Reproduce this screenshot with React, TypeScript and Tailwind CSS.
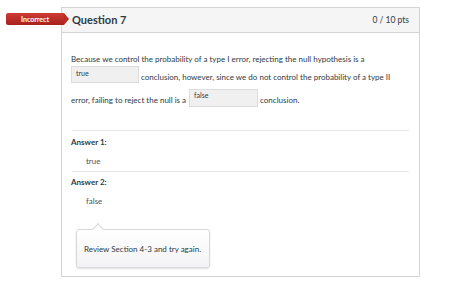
import React from "react";

export default function App() {
  return (
    <div className="w-[474px] h-[288px] bg-white relative overflow-hidden" style={{ fontFamily: "Lato, 'Open Sans', sans-serif" }}>
      <div className="pt-[7px] pl-[61px]">
        <div className="w-[359px] h-[270px] border border-[#d4d4d4] flex flex-col">
          <div className="h-[25px] bg-[#f5f5f5] border-b border-[#d4d4d4] flex items-center justify-between pl-[10px] pr-[10px]">
            <span className="text-[11px] font-bold text-[#2d3b45]">Question 7</span>
            <span className="text-[8.5px] text-[#2d3b45]">0 / 10 pts</span>
          </div>
          <div className="px-[9px] pt-[20px] text-[8px] text-[#2d3b45]">
            <div className="leading-[12px]">Because we control the probability of a type I error, rejecting the null hypothesis is a</div>
            <div className="flex items-end mt-[1px]">
              <div className="w-[68px] h-[17px] bg-[#f0f0f0] border border-[#dcdcdc] text-[7px] pl-[4px] pt-[2px] leading-[9px]">true</div>
              <span className="ml-[2px] leading-[12px]">conclusion, however, since we do not control the probability of a type II</span>
            </div>
            <div className="flex items-end mt-[6px]">
              <span className="leading-[12px] mb-[1px]">error, failing to reject the null is a</span>
              <div className="ml-[3px] w-[69px] h-[18px] bg-[#f0f0f0] border border-[#dcdcdc] text-[7px] pl-[4px] pt-[1px] leading-[9px]">false</div>
              <span className="ml-[2px] leading-[12px] mb-[1px]">conclusion.</span>
            </div>
            <div className="mt-[23px] border-t border-[#e6e6e6] mx-[1px]"></div>
            <div className="text-[8px] font-bold leading-[12px] mt-[5px]">Answer 1:</div>
            <div className="leading-[12px] mt-[7px] pl-[15px] text-[#4a5560]">true</div>
            <div className="mt-[4px] border-t border-[#e6e6e6] mx-[1px]"></div>
            <div className="text-[8px] font-bold leading-[12px] mt-[4px]">Answer 2:</div>
            <div className="leading-[12px] mt-[7px] pl-[15px] text-[#4a5560]">false</div>
            <div className="relative mt-[22px] ml-[5px] w-[134px] h-[39px] rounded-[3px] border border-[#d8d8d8] bg-gradient-to-b from-white to-[#f3f3f5] shadow-[0_1px_2px_rgba(0,0,0,0.12)] flex items-center pl-[7px] text-[8px] text-[#2d3b45]">
              <div className="absolute -top-[5px] left-[17px] w-[8px] h-[8px] bg-white border-l border-t border-[#d8d8d8] rotate-45"></div>
              Review Section 4-3 and try again.
            </div>
          </div>
        </div>
      </div>
      <div className="absolute left-[6px] top-[13px] flex items-center">
        <div className="w-[58px] h-[12px] bg-gradient-to-b from-[#cf3b34] to-[#a8201c] rounded-l-[2px] flex items-center justify-center text-white text-[7px] font-bold">Incorrect</div>
        <div className="w-0 h-0 border-t-[6px] border-b-[6px] border-l-[5px] border-t-transparent border-b-transparent border-l-[#bb2b26]"></div>
      </div>
    </div>
  );
}
